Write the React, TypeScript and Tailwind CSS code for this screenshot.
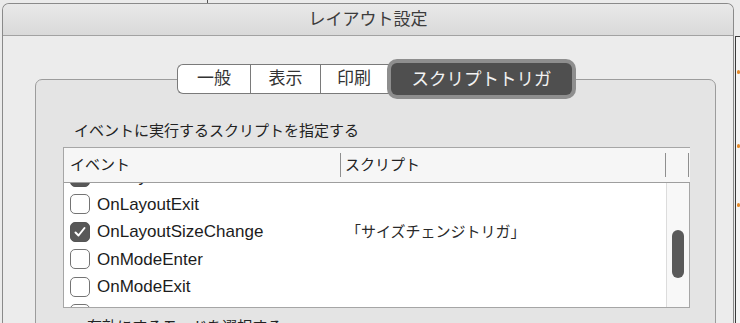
const rows = [
  { name: "OnLayoutEnter", checked: true, script: "" },
  { name: "OnLayoutExit", checked: false, script: "" },
  { name: "OnLayoutSizeChange", checked: true, script: "「サイズチェンジトリガ」" },
  { name: "OnModeEnter", checked: false, script: "" },
  { name: "OnModeExit", checked: false, script: "" },
  { name: "OnViewChange", checked: false, script: "" },
];

const jp = "font-['Liberation_Sans','Noto_Sans_CJK_JP',sans-serif]";

function Checkbox({ checked }: { checked: boolean }) {
  if (checked) {
    return (
      <span className="flex h-[20px] w-[20px] shrink-0 items-center justify-center rounded-[5px] border border-[#555] bg-[#585858]">
        <svg width="14" height="14" viewBox="0 0 14 14" fill="none">
          <path d="M2.5 7.5 L5.5 10.5 L11.5 3" stroke="white" strokeWidth="2" strokeLinecap="round" strokeLinejoin="round" />
        </svg>
      </span>
    );
  }
  return <span className="h-[20px] w-[20px] shrink-0 rounded-[5px] border-[1.5px] border-[#747474] bg-white" />;
}

export default function App() {
  return (
    <div className={`relative flex h-[323px] w-[740px] overflow-hidden bg-[#ebebeb] ${jp}`}>
      <span className="absolute left-[207px] top-0 h-[3px] w-px bg-[#555]" />

      <div className="ml-[2px] mt-[3px] flex h-[340px] w-[732px] shrink-0 flex-col overflow-hidden rounded-t-[7px] border-x border-t border-[#8a8a8a]">
        <div className="flex h-[32px] shrink-0 items-center justify-center border-b border-[#a2a2a2] bg-gradient-to-b from-[#e9e9e9] to-[#d9d9d9] text-[17px] text-[#3c3c3c]">
          レイアウト設定
        </div>

        <div className="flex flex-1 flex-col bg-[#ececec] pt-[27px]">
          <div className="relative z-10 flex h-[32px] items-center pl-[174px]">
            <div className="flex h-[30px] rounded-l-[6px] border-y border-l border-[#7a7a7a] bg-white text-[17px] text-[#333]">
              <div className="flex w-[73px] items-center justify-center border-r border-[#7a7a7a]">一般</div>
              <div className="flex w-[70px] items-center justify-center border-r border-[#7a7a7a]">表示</div>
              <div className="flex w-[70px] items-center justify-center pr-[4px]">印刷</div>
            </div>
            <div className="flex h-[32px] w-[181px] items-center justify-center rounded-[6px] bg-[#4f4f4f] text-[17.5px] text-[#f2f2f2] shadow-[0_0_0_4px_#8e8e8e]">
              スクリプトトリガ
            </div>
          </div>

          <div className="ml-[32px] -mt-[16px] flex h-[300px] w-[681px] flex-col rounded-[7px] border border-[#9c9c9c] bg-[#e4e4e4] pt-[41px]">
            <div className="ml-[38px] h-[20px] text-[15px] leading-[20px] text-[#222]">
              イベントに実行するスクリプトを指定する
            </div>

            <div className="ml-[27px] mt-[6px] w-[627px] border-y border-l border-[#a6a6a6]">
              <div className="flex h-[35px] items-center border-b border-[#9e9e9e] bg-[#f6f6f6] text-[15px] text-[#222]">
                <div className="w-[276px] pl-[6px]">イベント</div>
                <span className="h-[24px] w-px bg-[#8f8f8f]" />
                <div className="w-[324px] pl-[4px]">スクリプト</div>
                <span className="h-[24px] w-px bg-[#8f8f8f]" />
                <div className="w-[22px]" />
                <span className="h-[24px] w-px bg-[#8f8f8f]" />
              </div>

              <div className="flex h-[124px] border-r border-[#a6a6a6] bg-white">
                <div className="w-[602px] overflow-hidden">
                  <div className="-mt-[20px]">
                    {rows.map((r) => (
                      <div key={r.name} className="flex h-[27.5px] items-center">
                        <div className="flex w-[276px] items-center gap-[7px] pl-[6px] text-[17px] text-[#1c1c1c]">
                          <Checkbox checked={r.checked} />
                          <span>{r.name}</span>
                        </div>
                        <div className="pl-[6px] text-[15px] text-[#2a2a2a]">{r.script}</div>
                      </div>
                    ))}
                  </div>
                </div>
                <div className="flex w-[23px] flex-col items-center border-l border-[#dcdcdc] bg-[#f8f8f8] pt-[47px]">
                  <span className="h-[48px] w-[12px] rounded-full bg-[#5a5a5a]" />
                </div>
              </div>
            </div>

            <div className="ml-[51px] mt-[9px] text-[15px] leading-[20px] text-[#222]">
              有効にするモードを選択する
            </div>
          </div>
        </div>
      </div>

      <div className="relative ml-[1px] mt-[36px] flex-1 border-l border-t border-[#3a3a3a] bg-[#f4f4f4]">
        <span className="absolute left-[1px] top-[33px] h-[4px] w-[3px] rounded-full bg-[#e38a2c]" />
        <span className="absolute left-[1px] top-[107px] h-[4px] w-[3px] rounded-full bg-[#e38a2c]" />
        <span className="absolute left-[1px] top-[166px] h-[4px] w-[3px] rounded-full bg-[#e38a2c]" />
      </div>
    </div>
  );
}
